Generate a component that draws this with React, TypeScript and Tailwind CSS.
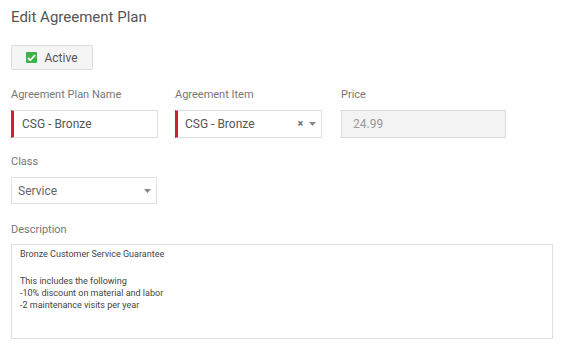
import React from "react";

function Caret({ className = "" }: { className?: string }) {
  return (
    <svg width="7" height="4" viewBox="0 0 7 4" className={className}>
      <path d="M0 0h7L3.5 4z" fill="#888" />
    </svg>
  );
}

export default function App() {
  return (
    <div className="w-[562px] h-[353px] bg-white px-[11px] pt-[8px] font-['Roboto',sans-serif] text-[#555]">
      <h1 className="text-[15px] leading-[18px] text-[#555]">Edit Agreement Plan</h1>

      {/* status toggle */}
      <button className="mt-[19px] flex h-[25px] w-[82px] items-center justify-center gap-[7px] rounded-[2px] border border-[#dcdcdc] bg-[#f5f5f5] text-[12px] text-[#555]">
        <span className="flex h-[11px] w-[11px] items-center justify-center rounded-[1px] bg-[#3fb14a]">
          <svg width="9" height="8" viewBox="0 0 9 8">
            <path d="M1 4l2.3 2.3L8 1.2" fill="none" stroke="#fff" strokeWidth="1.8" />
          </svg>
        </span>
        Active
      </button>

      <div className="mt-[18px] flex">
        <div className="w-[147px]">
          <div className="text-[11px] leading-[14px] text-[#777]">Agreement Plan Name</div>
          <div className="mt-[8px] flex h-[28px] items-center border border-l-[3px] border-[#e0e0e0] border-l-[#d0202e] pl-[8px] text-[12px] text-[#555]">
            CSG - Bronze
          </div>
        </div>
        <div className="ml-[17px] w-[147px]">
          <div className="text-[11px] leading-[14px] text-[#777]">Agreement Item</div>
          <div className="mt-[8px] flex h-[28px] items-center border border-l-[3px] border-[#e0e0e0] border-l-[#d0202e] pl-[7px] pr-[5px] text-[12px] text-[#555]">
            <span className="flex-1">CSG - Bronze</span>
            <span className="mr-[6px] text-[10px] font-bold leading-none text-[#666]">×</span>
            <Caret />
          </div>
        </div>
        <div className="ml-[19px] w-[165px]">
          <div className="text-[11px] leading-[14px] text-[#777]">Price</div>
          <div className="mt-[8px] flex h-[28px] items-center border border-[#dcdcdc] bg-[#f3f3f3] pl-[11px] text-[12px] text-[#999]">
            24.99
          </div>
        </div>
      </div>

      <div className="mt-[17px] text-[11px] leading-[14px] text-[#777]">Class</div>
      <div className="mt-[8px] flex h-[27px] w-[146px] items-center border border-[#e0e0e0] pl-[6px] pr-[5px] text-[12px] text-[#666]">
        <span className="flex-1">Service</span>
        <Caret />
      </div>

      <div className="mt-[19px] text-[11px] leading-[14px] text-[#777]">Description</div>
      <div className="mt-[7px] h-[95px] w-[542px] border border-[#e0e0e0] px-[8px] pt-[3px] text-[9px] leading-[12px] text-[#444]">
        <div>Bronze Customer Service Guarantee</div>
        <div className="h-[15px]" />
        <div>This includes the following</div>
        <div>-10% discount on material and labor</div>
        <div>-2 maintenance visits per year</div>
      </div>
    </div>
  );
}
